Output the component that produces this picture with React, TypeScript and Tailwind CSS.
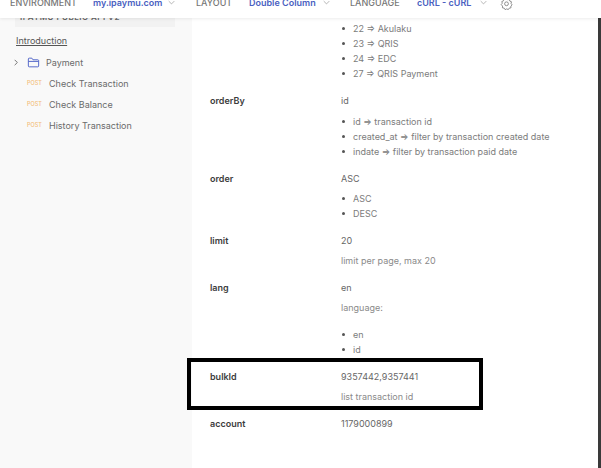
import React from "react";

const font = { fontFamily: "Inter, 'Noto Sans', sans-serif" };

function Chevron({ className }: { className?: string }) {
  return (
    <svg viewBox="0 0 10 6" className={className} fill="none" stroke="#8a8a8a" strokeWidth="0.9">
      <path d="M1 1l4 4 4-4" />
    </svg>
  );
}

function Bullets({ items }: { items: string[] }) {
  return (
    <ul className="flex flex-col">
      {items.map((item) => (
        <li key={item} className="flex items-center h-[15px] text-[#7c7c7c]">
          <span className="w-[3px] h-[3px] rounded-full bg-[#555] ml-[1px] mr-[8px]" />
          {item}
        </li>
      ))}
    </ul>
  );
}

function Param({ name, value, children, className }: { name: string; value: string; children?: React.ReactNode; className?: string }) {
  return (
    <div className={"flex " + (className ?? "")}>
      <div className="w-[131px] font-semibold text-[#3c3c3c] h-[15px] leading-[15px]">{name}</div>
      <div className="flex-1">
        <div className="h-[15px] leading-[15px] text-[#666666]">{value}</div>
        {children}
      </div>
    </div>
  );
}

function Note({ text }: { text: string }) {
  return <div className="mt-[5px] h-[15px] leading-[15px] text-[#8a8a8a]">{text}</div>;
}

function SideItem({ label }: { label: string }) {
  return (
    <div className="flex items-center h-[21px] pl-[27px]">
      <span className="w-[22px] text-[5.5px] font-medium text-[#f3bd79]">POST</span>
      <span className="text-[#6b6b6b]">{label}</span>
    </div>
  );
}

export default function App() {
  return (
    <div style={font} className="w-[601px] h-[468px] overflow-hidden bg-white flex flex-col text-[9px]">
      <header className="relative z-10 h-[18px] shrink-0 bg-white shadow-[0_1px_3px_rgba(0,0,0,0.08)] flex items-start leading-[6px] pl-[10px]">
        <span className="w-[83px] text-[#777] font-medium">ENVIRONMENT</span>
        <span className="w-[75px] text-[#4a5fc1] font-semibold">my.ipaymu.com</span>
        <Chevron className="w-[7px] h-[5px]" />
        <span className="ml-[21px] w-[53px] text-[#777] font-medium">LAYOUT</span>
        <span className="w-[74px] text-[#4a5fc1] font-semibold">Double Column</span>
        <Chevron className="w-[7px] h-[5px]" />
        <span className="ml-[20px] w-[67px] text-[#777] font-medium">LANGUAGE</span>
        <span className="w-[63px] text-[#4a5fc1] font-semibold">cURL - cURL</span>
        <Chevron className="w-[7px] h-[5px]" />
        <svg viewBox="0 0 24 24" className="ml-[13px] -mt-[3px] w-[13px] h-[13px]" fill="none" stroke="#777" strokeWidth="1.5">
          <path d="M12 2.500l2 2.600 3.200-.6 1 3.100 3 1.200-.8 3.200 2 2.500-2.300 2.200.2 3.300-3.200.5-1.700 2.800-3-1.300-3 1.300-1.700-2.800-3.200-.5.2-3.300L2.200 14l2-2.500-.8-3.200 3-1.200 1-3.100 3.200.6z" />
          <circle cx="12" cy="12.500" r="3.500" />
        </svg>
      </header>

      <div className="flex flex-1 min-h-0">
        <aside className="w-[192px] shrink-0 bg-[#f9f9f9]">
          <div className="ml-[15px] w-[160px] h-[9px] bg-[#f2f2f2] relative overflow-hidden">
            <div className="absolute left-[5px] top-[-6px] text-[8px] leading-[10px] font-semibold tracking-[0.5px] text-[#666] whitespace-nowrap">
              IPAYMU PUBLIC API V2
            </div>
          </div>
          <div className="ml-[16px] mt-[7px] h-[13px] leading-[13px] underline text-[#555]">Introduction</div>
          <div className="flex items-center h-[21px] mt-[5px] pl-[14px]">
            <svg viewBox="0 0 6 10" className="w-[4px] h-[7px]" fill="none" stroke="#555" strokeWidth="1.2">
              <path d="M1 1l4 4-4 4" />
            </svg>
            <svg viewBox="0 0 24 24" className="ml-[9px] w-[13px] h-[13px]" fill="none" stroke="#5468c9" strokeWidth="1.8">
              <path d="M2.500 5.500a1.500 1.500 0 0 1 1.500-1.500h5l2 3h9a1.500 1.500 0 0 1 1.500 1.500v10a1.500 1.500 0 0 1-1.500 1.500H4a1.500 1.500 0 0 1-1.500-1.500zM2.500 10h19" />
            </svg>
            <span className="ml-[6px] text-[#6b6b6b]">Payment</span>
          </div>
          <SideItem label="Check Transaction" />
          <SideItem label="Check Balance" />
          <SideItem label="History Transaction" />
        </aside>

        <main className="flex-1 min-w-0 pl-[18px] pt-[3px] border-r-[3px] border-[#3a3a3a]">
          <div className="pl-[131px]">
            <Bullets items={["22 ⇒ Akulaku", "23 ⇒ QRIS", "24 ⇒ EDC", "27 ⇒ QRIS Payment"]} />
          </div>
          <Param name="orderBy" value="id" className="mt-[12px]">
            <div className="mt-[6px]">
              <Bullets items={["id ⇒ transaction id", "created_at ⇒ filter by transaction created date", "indate ⇒ filter by transaction paid date"]} />
            </div>
          </Param>
          <Param name="order" value="ASC" className="mt-[12px]">
            <div className="mt-[5px]">
              <Bullets items={["ASC", "DESC"]} />
            </div>
          </Param>
          <Param name="limit" value="20" className="mt-[12px]">
            <Note text="limit per page, max 20" />
          </Param>
          <Param name="lang" value="en" className="mt-[12px]">
            <Note text="language:" />
            <div className="mt-[12px]">
              <Bullets items={["en", "id"]} />
            </div>
          </Param>
          <div className="relative mt-[12px]">
            <Param name="bulkId" value="9357442,9357441">
              <Note text="list transaction id" />
            </Param>
            <div className="absolute left-[-23px] top-[-11px] w-[296px] h-[52px] border-4 border-black" />
          </div>
          <Param name="account" value="1179000899" className="mt-[12px]" />
        </main>
      </div>
    </div>
  );
}
